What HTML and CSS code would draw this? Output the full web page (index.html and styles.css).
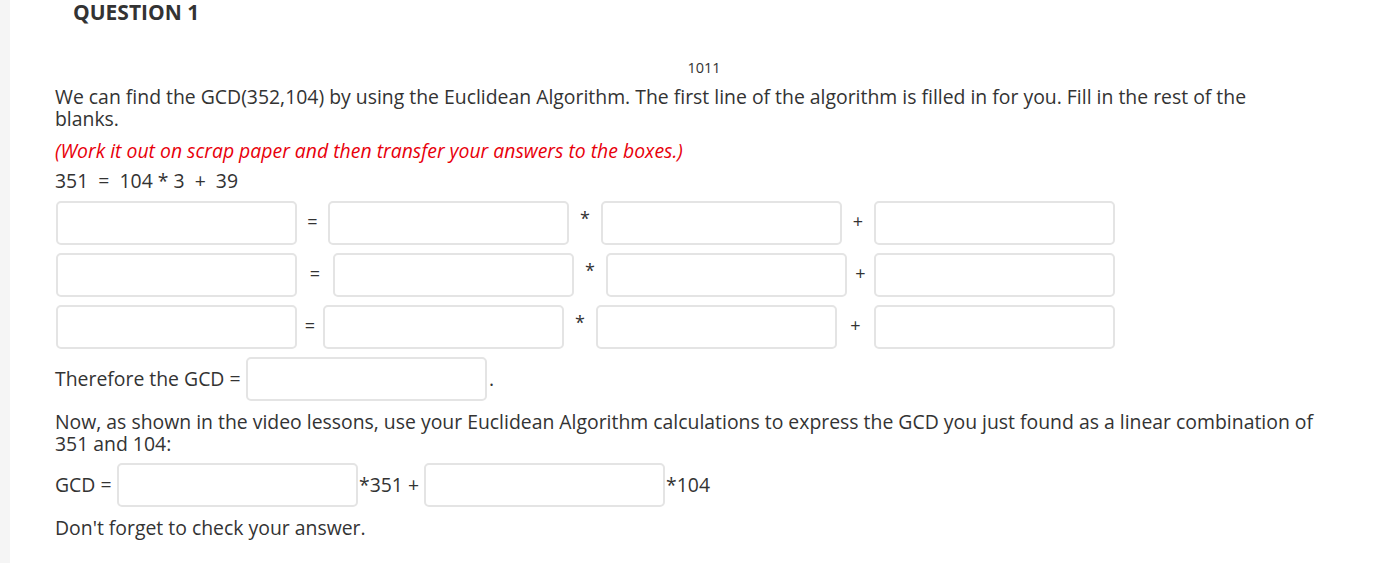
FILE: index.html
```html
<!DOCTYPE html>
<html>
<head>
<meta charset="utf-8">
<link rel="stylesheet" href="styles.css">
</head>
<body>
<div class="page">
  <h1 class="qtitle">QUESTION 1</h1>
  <div class="content">
    <div class="qnum">1011</div>
    <p class="intro">We can find the GCD(352,104) by using the Euclidean Algorithm. The first line of the algorithm is filled in for you. Fill in the rest of the blanks.</p>
    <p class="note">(Work it out on scrap paper and then transfer your answers to the boxes.)</p>
    <p class="given">351&nbsp; = &nbsp;104 * 3 &nbsp;+ &nbsp;39</p>
    <div class="rows">
      <div class="row r1">
        <input class="box" type="text"><span class="op eq">=</span>
        <input class="box" type="text"><span class="op st">*</span>
        <input class="box" type="text"><span class="op pl">+</span>
        <input class="box" type="text">
      </div>
      <div class="row r2">
        <input class="box" type="text"><span class="op eq">=</span>
        <input class="box" type="text"><span class="op st">*</span>
        <input class="box" type="text"><span class="op pl">+</span>
        <input class="box" type="text">
      </div>
      <div class="row r3">
        <input class="box" type="text"><span class="op eq">=</span>
        <input class="box" type="text"><span class="op st">*</span>
        <input class="box" type="text"><span class="op pl">+</span>
        <input class="box" type="text">
      </div>
    </div>
    <div class="line therefore"><span class="lbl">Therefore the GCD =</span><input class="box" type="text"><span class="dot">.</span></div>
    <p class="now">Now, as shown in the video lessons, use your Euclidean Algorithm calculations to express the GCD you just found as a linear combination of 351 and 104:</p>
    <div class="line combo"><span class="lbl">GCD =</span><input class="box" type="text"><span class="mul">*351 +</span><input class="box" type="text"><span class="mul">*104</span></div>
    <p class="check">Don't forget to check your answer.</p>
  </div>
</div>
</body>
</html>
```

FILE: styles.css
```css
html, body {
  margin: 0;
  padding: 0;
  background: #fff;
}
body {
  font-family: "Open Sans", "Liberation Sans", sans-serif;
  color: #333;
}
.page {
  border-left: 10px solid #f5f5f5;
  min-height: 563px;
  box-sizing: border-box;
}
.qtitle {
  margin: 0;
  padding: 0 0 0 63px;
  font-size: 21px;
  line-height: 24px;
  font-weight: 700;
  color: #333;
}
.content {
  padding-left: 45px;
  width: 1298px;
  font-size: 19.4px;
  line-height: 22px;
}
.qnum {
  margin-top: 34px;
  text-align: center;
  font-size: 14.5px;
  line-height: 20px;
}
.intro {
  margin: 8px 0 0;
  max-width: 1230px;
}
.note {
  margin: 10px 0 0;
  color: #e8000b;
  font-style: italic;
}
.given {
  margin: 8px 0 0;
}
.rows {
  margin-top: 9px;
  display: flex;
  flex-direction: column;
  gap: 8px;
}
.row {
  display: flex;
  align-items: center;
}
.box {
  width: 241px;
  height: 44px;
  box-sizing: border-box;
  border: 2px solid #e4e4e4;
  border-radius: 5px;
  margin: 0;
  padding: 0 8px;
  font: inherit;
  background: #fff;
}
.op {
  font-size: 18px;
  display: inline-block;
  text-align: center;
}
.row .box:first-child { margin-left: 1px; }
.eq, .pl { margin-top: -4px; }
.st { margin-top: -10px; }
.r1 .eq { width: 31px; }
.r1 .st { width: 32px; }
.r1 .pl { width: 32px; }
.r2 .eq { width: 36px; }
.r2 .st { width: 32px; }
.r2 .pl { width: 27px; }
.r3 .eq { width: 26px; }
.r3 .st { width: 32px; }
.r3 .pl { width: 37px; }
.line {
  display: flex;
  align-items: center;
}
.therefore {
  margin-top: 8px;
}
.therefore .lbl { width: 191px; }
.dot { margin-left: 2px; }
.now {
  margin: 10px 0 0;
  max-width: 1285px;
}
.combo {
  margin-top: 8px;
}
.combo .lbl { width: 62px; }
.combo .mul { padding: 0 5px 0 1px; }
.check {
  margin: 10px 0 0;
}
```
